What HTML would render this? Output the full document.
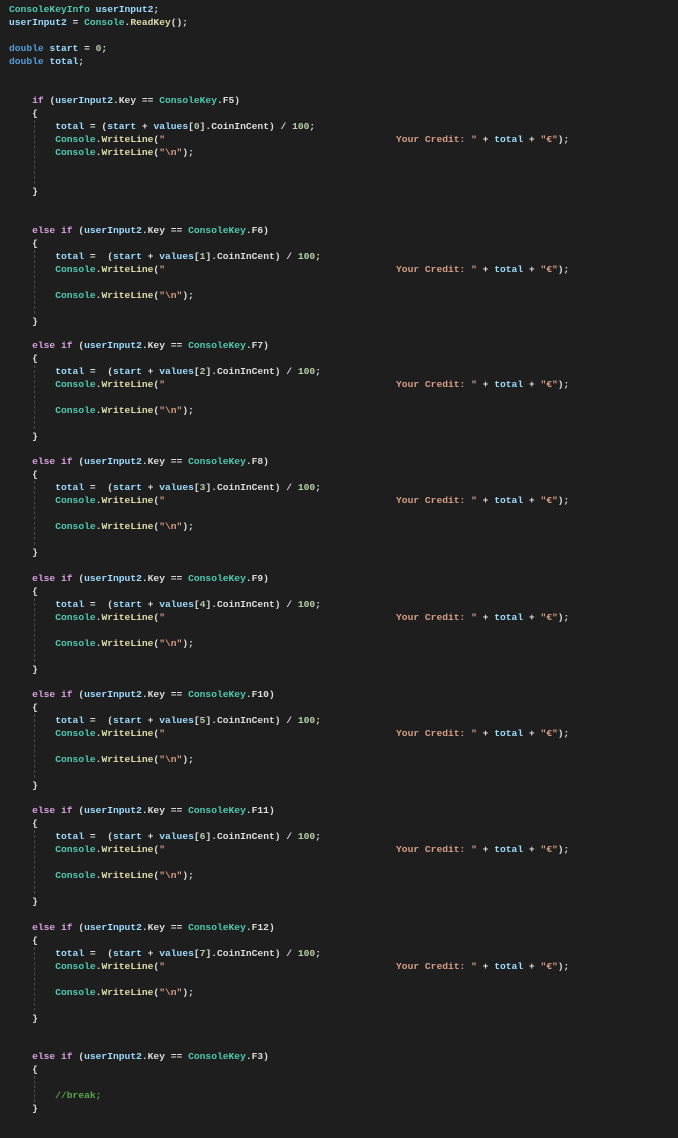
<!DOCTYPE html>
<html><head><meta charset="utf-8"><style>
html,body{margin:0;padding:0;background:#1e1e1e;width:678px;height:1138px;overflow:hidden;}
pre{margin:0;position:absolute;left:9px;font-family:"Liberation Mono",monospace;font-size:9.65px;line-height:13px;font-weight:bold;color:#dcdcdc;white-space:pre;}
.t{color:#4ec9b0}.k{color:#569cd6}.c{color:#d8a0df}.v{color:#9cdcfe}.m{color:#dcdcaa}.s{color:#d69d85}.n{color:#b5cea8}.cm{color:#57a64a}
.g{position:absolute;left:34px;width:0;border-left:1px dashed #4a4a4a;}
</style></head><body>
<div class="g" style="top:120px;height:64px"></div>
<div class="g" style="top:250px;height:64px"></div>
<div class="g" style="top:365px;height:64px"></div>
<div class="g" style="top:481px;height:64px"></div>
<div class="g" style="top:598px;height:64px"></div>
<div class="g" style="top:714px;height:64px"></div>
<div class="g" style="top:830px;height:64px"></div>
<div class="g" style="top:947px;height:64px"></div>
<div class="g" style="top:1076px;height:26px"></div>
<pre style="top:2.5px"><span class="t">ConsoleKeyInfo</span> <span class="v">userInput2</span>;
<span class="v">userInput2</span> = <span class="t">Console</span>.<span class="m">ReadKey</span>();

<span class="k">double</span> <span class="v">start</span> = <span class="n">0</span>;
<span class="k">double</span> <span class="v">total</span>;


    <span class="c">if</span> (<span class="v">userInput2</span>.Key == <span class="t">ConsoleKey</span>.F5)
    {
        <span class="v">total</span> = (<span class="v">start</span> + <span class="v">values</span>[<span class="n">0</span>].CoinInCent) / <span class="n">100</span>;
        <span class="t">Console</span>.<span class="m">WriteLine</span>(<span class="s">"                                        Your Credit: "</span> + <span class="v">total</span> + <span class="s">"€"</span>);
        <span class="t">Console</span>.<span class="m">WriteLine</span>(<span class="s">"\n"</span>);


    }</pre>
<pre style="top:223.5px">    <span class="c">else if</span> (<span class="v">userInput2</span>.Key == <span class="t">ConsoleKey</span>.F6)
    {
        <span class="v">total</span> =  (<span class="v">start</span> + <span class="v">values</span>[<span class="n">1</span>].CoinInCent) / <span class="n">100</span>;
        <span class="t">Console</span>.<span class="m">WriteLine</span>(<span class="s">"                                        Your Credit: "</span> + <span class="v">total</span> + <span class="s">"€"</span>);

        <span class="t">Console</span>.<span class="m">WriteLine</span>(<span class="s">"\n"</span>);

    }</pre>
<pre style="top:338.5px">    <span class="c">else if</span> (<span class="v">userInput2</span>.Key == <span class="t">ConsoleKey</span>.F7)
    {
        <span class="v">total</span> =  (<span class="v">start</span> + <span class="v">values</span>[<span class="n">2</span>].CoinInCent) / <span class="n">100</span>;
        <span class="t">Console</span>.<span class="m">WriteLine</span>(<span class="s">"                                        Your Credit: "</span> + <span class="v">total</span> + <span class="s">"€"</span>);

        <span class="t">Console</span>.<span class="m">WriteLine</span>(<span class="s">"\n"</span>);

    }</pre>
<pre style="top:454.5px">    <span class="c">else if</span> (<span class="v">userInput2</span>.Key == <span class="t">ConsoleKey</span>.F8)
    {
        <span class="v">total</span> =  (<span class="v">start</span> + <span class="v">values</span>[<span class="n">3</span>].CoinInCent) / <span class="n">100</span>;
        <span class="t">Console</span>.<span class="m">WriteLine</span>(<span class="s">"                                        Your Credit: "</span> + <span class="v">total</span> + <span class="s">"€"</span>);

        <span class="t">Console</span>.<span class="m">WriteLine</span>(<span class="s">"\n"</span>);

    }</pre>
<pre style="top:571.5px">    <span class="c">else if</span> (<span class="v">userInput2</span>.Key == <span class="t">ConsoleKey</span>.F9)
    {
        <span class="v">total</span> =  (<span class="v">start</span> + <span class="v">values</span>[<span class="n">4</span>].CoinInCent) / <span class="n">100</span>;
        <span class="t">Console</span>.<span class="m">WriteLine</span>(<span class="s">"                                        Your Credit: "</span> + <span class="v">total</span> + <span class="s">"€"</span>);

        <span class="t">Console</span>.<span class="m">WriteLine</span>(<span class="s">"\n"</span>);

    }</pre>
<pre style="top:687.5px">    <span class="c">else if</span> (<span class="v">userInput2</span>.Key == <span class="t">ConsoleKey</span>.F10)
    {
        <span class="v">total</span> =  (<span class="v">start</span> + <span class="v">values</span>[<span class="n">5</span>].CoinInCent) / <span class="n">100</span>;
        <span class="t">Console</span>.<span class="m">WriteLine</span>(<span class="s">"                                        Your Credit: "</span> + <span class="v">total</span> + <span class="s">"€"</span>);

        <span class="t">Console</span>.<span class="m">WriteLine</span>(<span class="s">"\n"</span>);

    }</pre>
<pre style="top:803.5px">    <span class="c">else if</span> (<span class="v">userInput2</span>.Key == <span class="t">ConsoleKey</span>.F11)
    {
        <span class="v">total</span> =  (<span class="v">start</span> + <span class="v">values</span>[<span class="n">6</span>].CoinInCent) / <span class="n">100</span>;
        <span class="t">Console</span>.<span class="m">WriteLine</span>(<span class="s">"                                        Your Credit: "</span> + <span class="v">total</span> + <span class="s">"€"</span>);

        <span class="t">Console</span>.<span class="m">WriteLine</span>(<span class="s">"\n"</span>);

    }</pre>
<pre style="top:920.5px">    <span class="c">else if</span> (<span class="v">userInput2</span>.Key == <span class="t">ConsoleKey</span>.F12)
    {
        <span class="v">total</span> =  (<span class="v">start</span> + <span class="v">values</span>[<span class="n">7</span>].CoinInCent) / <span class="n">100</span>;
        <span class="t">Console</span>.<span class="m">WriteLine</span>(<span class="s">"                                        Your Credit: "</span> + <span class="v">total</span> + <span class="s">"€"</span>);

        <span class="t">Console</span>.<span class="m">WriteLine</span>(<span class="s">"\n"</span>);

    }</pre>
<pre style="top:1049.5px">    <span class="c">else if</span> (<span class="v">userInput2</span>.Key == <span class="t">ConsoleKey</span>.F3)
    {

        <span class="cm">//break;</span>
    }</pre>
</body></html>
